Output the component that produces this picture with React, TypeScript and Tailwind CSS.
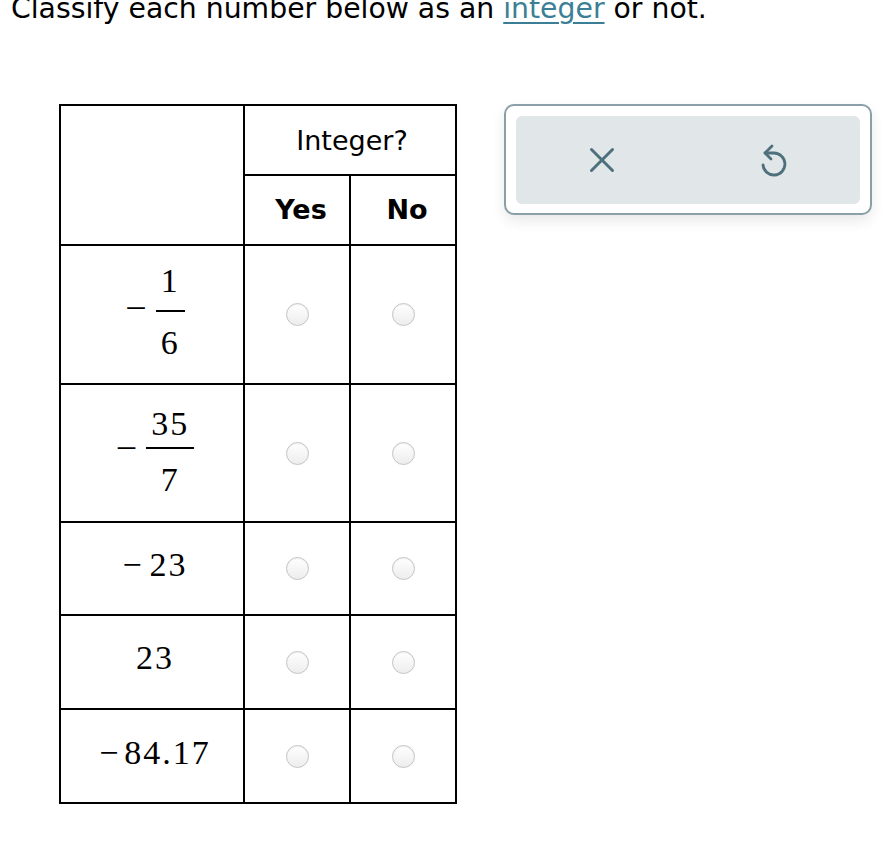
import React from "react";

const cell = "border-r-2 border-b-2 border-black flex items-center justify-center";

function Radio() {
  return (
    <input
      type="radio"
      className="appearance-none w-[23px] h-[23px] rounded-full border border-[#c4c4c4] bg-linear-to-b from-white to-[#ededed] shadow-[inset_0_1px_1px_rgba(0,0,0,0.06)]"
    />
  );
}

function Frac({ num, den, numGap }: { num: string; den: string; numGap: string }) {
  return (
    <span className="inline-flex flex-col items-center ml-[9px]">
      <span className={"px-[5px] leading-[34px] " + numGap}>{num}</span>
      <span className="block h-[2px] w-full bg-black" />
      <span className="px-[5px] leading-[34px] mt-[14px]">{den}</span>
    </span>
  );
}

export default function App() {
  const math = "font-[Liberation_Serif,Times_New_Roman,serif] text-[34px] tracking-[2px] text-black";
  return (
    <div className="min-h-screen bg-white text-black font-[DejaVu_Sans,Verdana,sans-serif]">
      <p className="text-[28.3px] leading-[18px] ml-[11px] whitespace-nowrap">
        Classify each number below as an{" "}
        <a href="#" className="text-[#3b7f96] underline decoration-[2px] underline-offset-[4px]">
          integer
        </a>{" "}
        or not.
      </p>
      <div className="flex items-start ml-[59px] mt-[86px] gap-[47px]">
        <div className="grid grid-cols-[184px_106px_106px] grid-rows-[70px_70px_139px_138px_93px_94px_94px] border-l-2 border-t-2 border-black w-max">
          <div className={cell + " row-span-2"} />
          <div className={cell + " col-span-2 text-[27px] pt-[3px] pl-[4px]"}>Integer?</div>
          <div className={cell + " text-[27px] font-bold pl-[8px] pt-[1px]"}>Yes</div>
          <div className={cell + " text-[27px] font-bold pl-[8px] pt-[1px]"}>No</div>

          <div className={cell + " pl-[6px] pb-[5px] " + math}>
            <span className="text-[38px] leading-[34px] mb-[8px] tracking-normal">−</span>
            <Frac num="1" den="6" numGap="mb-[12px]" />
          </div>
          <div className={cell}><Radio /></div>
          <div className={cell}><Radio /></div>

          <div className={cell + " pl-[6px] pb-[2px] " + math}>
            <span className="text-[38px] leading-[34px] mb-[8px] tracking-normal">−</span>
            <Frac num="35" den="7" numGap="mb-[6px]" />
          </div>
          <div className={cell}><Radio /></div>
          <div className={cell}><Radio /></div>

          <div className={cell + " pl-[6px] pb-[7px] leading-[34px] " + math}>
            <span className="tracking-normal">−</span>
            <span className="ml-[8px]">23</span>
          </div>
          <div className={cell}><Radio /></div>
          <div className={cell}><Radio /></div>

          <div className={cell + " pl-[6px] pb-[8px] leading-[34px] " + math}>
            <span>23</span>
          </div>
          <div className={cell}><Radio /></div>
          <div className={cell}><Radio /></div>

          <div className={cell + " pl-[6px] pb-[7px] leading-[34px] " + math}>
            <span className="tracking-normal">−</span>
            <span className="ml-[6px]">84.17</span>
          </div>
          <div className={cell}><Radio /></div>
          <div className={cell}><Radio /></div>
        </div>

        <div className="w-[368px] h-[111px] rounded-[10px] border-2 border-[#8a9fa8] bg-white p-[10px] pb-[9px] shadow-[0_6px_14px_rgba(0,0,0,0.09)]">
          <div className="flex h-full rounded-[6px] bg-[#e1e6e9]">
            <button className="flex-1 flex items-center justify-center">
              <svg width="26" height="26" viewBox="0 0 26 26" fill="none" stroke="#4e707d" strokeWidth="3" strokeLinecap="round">
                <line x1="2.5" y1="2.5" x2="23.5" y2="23.5" />
                <line x1="23.5" y1="2.5" x2="2.5" y2="23.5" />
              </svg>
            </button>
            <button className="flex-1 flex items-center justify-center">
              <svg width="28" height="36" viewBox="0 0 28 36" fill="none" stroke="#4e707d" strokeWidth="2.8" strokeLinecap="round" strokeLinejoin="round">
                <path d="M12 4 L5 11 L11 17" />
                <path d="M5 11 H14 A11 11 0 1 1 3 23" />
              </svg>
            </button>
          </div>
        </div>
      </div>
    </div>
  );
}
